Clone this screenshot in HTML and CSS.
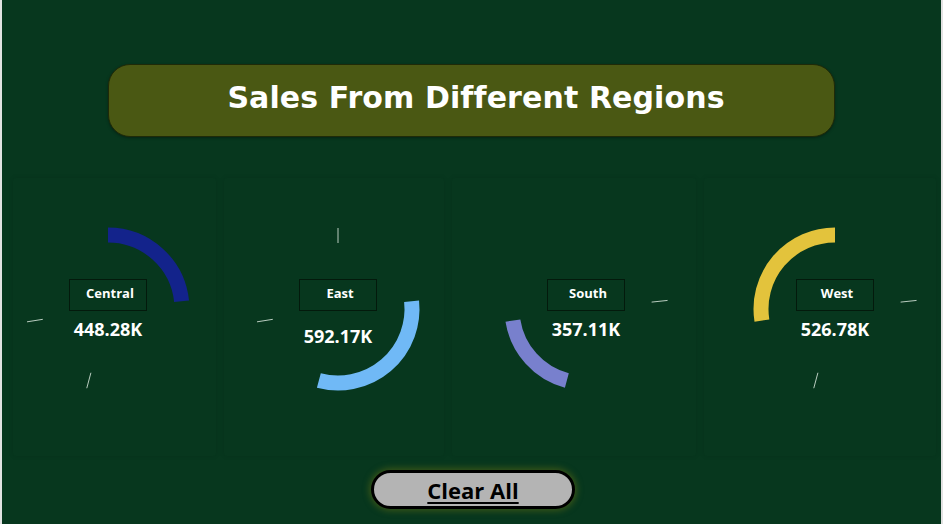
FILE: index.html
```html
<!DOCTYPE html>
<html lang="en">
<head>
    <meta charset="UTF-8">
    <meta name="viewport" content="width=device-width, initial-scale=1.0">
    <title>Sales From Different Regions</title>
    <link rel="stylesheet" href="styles.css">
</head>
<body>
<div class="page">
    <div class="title">Sales From Different Regions</div>

    <div class="cards">
        <div class="card card-central">
            <div class="gauge">
                <svg class="ring" viewBox="-90 -100 180 200" width="180" height="200">
                    <path d="M0 -74 A74 74 0 0 1 73.59 -7.74" stroke="#13238b"/>
                    <line x1="-65.19" y1="10.32" x2="-80.99" y2="12.83"/>
                    <line x1="-17.08" y1="63.75" x2="-21.22" y2="79.21"/>
                </svg>
                <div class="info">
                    <div class="label">Central</div>
                    <div class="value">448.28K</div>
                </div>
            </div>
        </div>
        <div class="card card-east">
            <div class="gauge">
                <svg class="ring" viewBox="-90 -100 180 200" width="180" height="200">
                    <path d="M73.59 -7.74 A74 74 0 0 1 -19.15 71.48" stroke="#70b9f6"/>
                    <line x1="0" y1="-66" x2="0" y2="-81"/>
                    <line x1="-65.19" y1="10.32" x2="-80.99" y2="12.83"/>
                </svg>
                <div class="info">
                    <div class="label">East</div>
                    <div class="value value-low">592.17K</div>
                </div>
            </div>
        </div>
        <div class="card card-south">
            <div class="gauge">
                <svg class="ring" viewBox="-90 -100 180 200" width="180" height="200">
                    <path d="M-19.15 71.48 A74 74 0 0 1 -73.09 11.57" stroke="#7880cd"/>
                    <line x1="65.64" y1="-6.90" x2="81.55" y2="-8.57"/>
                </svg>
                <div class="info">
                    <div class="label">South</div>
                    <div class="value">357.11K</div>
                </div>
            </div>
        </div>
        <div class="card card-west">
            <div class="gauge">
                <svg class="ring" viewBox="-90 -100 180 200" width="180" height="200">
                    <path d="M-73.09 11.57 A74 74 0 0 1 0 -74" stroke="#e3c33c"/>
                    <line x1="65.64" y1="-6.90" x2="81.55" y2="-8.57"/>
                    <line x1="-17.08" y1="63.75" x2="-21.22" y2="79.21"/>
                </svg>
                <div class="info">
                    <div class="label">West</div>
                    <div class="value">526.78K</div>
                </div>
            </div>
        </div>
    </div>

    <div class="actions">
        <button class="clear" type="button">Clear All</button>
    </div>
</div>
</body>
</html>
```

FILE: styles.css
```css
* {
    margin: 0;
    padding: 0;
    box-sizing: border-box;
}

body {
    background: #e2e2e2;
}

.page {
    margin: 0 2px;
    height: 524px;
    padding-top: 64px;
    background: #07371e;
    overflow: hidden;
}

.title {
    width: 727px;
    height: 73px;
    margin: 0 auto;
    padding: 0 0 6px 9px;
    display: flex;
    align-items: center;
    justify-content: center;
    background: #4a5813;
    border: 1px solid #1f2a08;
    border-radius: 22px;
    box-shadow: 0 1px 3px rgba(0, 0, 0, 0.35);
    color: #ffffff;
    font-family: "DejaVu Sans", sans-serif;
    font-weight: bold;
    font-size: 30px;
    letter-spacing: 0.1px;
}

.cards {
    display: flex;
    gap: 8px;
    margin-top: 41px;
    padding-left: 11px;
}

.card {
    height: 278px;
    padding-top: 31px;
    background: #07371e;
    box-shadow: 0 0 5px rgba(0, 0, 0, 0.1);
    border-radius: 3px;
}

.card-central { width: 203px; padding-left: 5px; }
.card-east    { width: 220px; padding-left: 24px; }
.card-south   { width: 244px; padding-left: 44px; }
.card-west    { width: 232px; padding-left: 41px; }

.gauge {
    position: relative;
    width: 180px;
    height: 200px;
}

.ring {
    display: block;
    fill: none;
}

.ring path {
    stroke-width: 15;
}

.ring line {
    stroke: #d8e6dc;
    stroke-width: 1;
    opacity: 0.85;
}

.info {
    position: absolute;
    top: 70px;
    left: 0;
    right: 0;
    display: flex;
    flex-direction: column;
    align-items: center;
    font-family: "Open Sans", sans-serif;
    font-weight: bold;
    color: #ffffff;
}

.label {
    width: 78px;
    height: 32px;
    padding: 0 0 4px 4px;
    line-height: 26px;
    text-align: center;
    font-size: 13px;
    border: 1px solid #031a0c;
}

.value {
    margin-top: 6px;
    font-size: 18px;
    line-height: 24px;
}

.value-low {
    margin-top: 13px;
}

.actions {
    display: flex;
    justify-content: center;
    padding-left: 3px;
    margin-top: 14px;
}

.clear {
    width: 204px;
    height: 39px;
    background: #b4b4b4;
    border: 3px solid #000000;
    border-radius: 20px;
    box-shadow: 0 0 6px 2px rgba(96, 110, 20, 0.55);
    font-family: "Open Sans", sans-serif;
    font-weight: bold;
    font-size: 22px;
    color: #000000;
    text-decoration: underline;
    text-decoration-thickness: 2px;
    text-underline-offset: 3px;
    cursor: pointer;
}
```
